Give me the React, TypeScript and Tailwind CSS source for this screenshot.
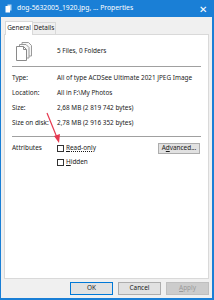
import React from "react"

const font = { fontFamily: '"Noto Sans", "Open Sans", "Liberation Sans", sans-serif' }

function FilesIcon() {
  return (
    <svg width="18" height="19" viewBox="0 0 18 19" fill="none">
      <path d="M7 0.5h6.5l3 3v10.5h-9.5z" fill="#f7f7f7" stroke="#9a9a9a" />
      <path d="M4.5 2.5h6.5l3 3v10.5h-9.5z" fill="#f7f7f7" stroke="#9a9a9a" />
      <path d="M1.5 4.5h7l3 3v11h-10z" fill="#ffffff" stroke="#8a8a8a" />
      <path d="M8.5 4.5v3h3" stroke="#8a8a8a" fill="none" />
    </svg>
  )
}

function TitleIcon() {
  return (
    <svg width="8" height="9" viewBox="0 0 8 9">
      <path d="M2.5 0.5h4v6h-4z" fill="#ffffff" opacity="0.7" />
      <path d="M0.5 2h4.5v6.5h-4.5z" fill="#ffffff" />
    </svg>
  )
}

function Checkbox() {
  return <div className="w-[7px] h-[7px] border border-[#333333] bg-white shrink-0" />
}

function InfoRow({ label, value }: { label: string; value: string }) {
  return (
    <div className="flex items-center h-[15px]">
      <span className="w-[45px] text-[#1a1a1a]">{label}</span>
      <span className="text-[#1a1a1a]">{value}</span>
    </div>
  )
}

export default function App() {
  return (
    <div className="w-[214px] h-[300px] bg-[#1a7fd6] flex flex-col overflow-hidden text-[6.4px] leading-none" style={font}>
      {/* Title bar */}
      <div className="h-[17px] flex items-center pl-[5px] pr-[7px] text-white">
        <TitleIcon />
        <span className="ml-[4px] text-[6.8px] flex-1">dog-5632005_1920.jpg, ... Properties</span>
        <span className="text-[10px] font-light">✕</span>
      </div>

      {/* Body */}
      <div className="flex-1 ml-[1px] mr-[2px] mb-[2px] bg-[#f0f0f0] flex flex-col pl-[3px] pr-[3px] pt-[4px]">
        {/* Tabs */}
        <div className="flex items-end h-[13px] pl-[1px] relative z-10">
          <div className="h-[14px] w-[28px] bg-white border border-b-0 border-[#d9d9d9] flex items-center justify-center text-[#1a1a1a] -mb-px">
            General
          </div>
          <div className="h-[12px] w-[23px] bg-[#f0f0f0] border border-l-0 border-b-0 border-[#d9d9d9] flex items-center justify-center text-[#1a1a1a]">
            Details
          </div>
        </div>

        {/* Panel */}
        <div className="relative w-[205px] h-[245px] bg-white border border-[#d9d9d9] px-[7px]">
          <div className="flex items-center h-[31px] pt-[1px]">
            <div className="w-[45px] pl-[3px]">
              <FilesIcon />
            </div>
            <span className="text-[#1a1a1a]">5 Files, 0 Folders</span>
          </div>
          <div className="h-px bg-[#a0a0a0] w-[189px]" />
          <div className="pt-[4px]">
            <InfoRow label="Type:" value="All of type ACDSee Ultimate 2021 JPEG Image" />
            <InfoRow label="Location:" value="All in F:\My Photos" />
            <InfoRow label="Size:" value="2,68 MB (2 819 742 bytes)" />
            <InfoRow label="Size on disk:" value="2,78 MB (2 916 352 bytes)" />
          </div>
          <div className="h-px bg-[#a0a0a0] w-[189px] mt-[5px]" />
          <div className="flex items-center h-[12px] mt-[5px]">
            <span className="w-[45px] text-[#1a1a1a]">Attributes</span>
            <Checkbox />
            <span className="ml-[2px] text-[#1a1a1a] underline decoration-[#1a1a1a] decoration-dotted underline-offset-[1px]">
              <span className="underline decoration-solid">R</span>ead-only
            </span>
            <div className="ml-auto mr-[1px] w-[42px] h-[11px] bg-[#e1e1e1] border border-[#adadad] flex items-center justify-center text-[#1a1a1a]">
              A<span className="underline">d</span>vanced...
            </div>
          </div>
          <div className="flex items-center h-[12px] mt-[2px]">
            <span className="w-[45px]" />
            <Checkbox />
            <span className="ml-[2px] text-[#1a1a1a]">
              <span className="underline">H</span>idden
            </span>
          </div>

          {/* Red arrow annotation */}
          <svg className="absolute left-[36px] top-[74px]" width="24" height="36" viewBox="0 0 24 36">
            <line x1="6" y1="4" x2="17" y2="31" stroke="#e53950" strokeWidth="1.2" />
            <path d="M13 27 L18 34 L19 25 Z" fill="#e53950" />
          </svg>
        </div>

        {/* Buttons */}
        <div className="flex justify-end gap-[5px] mt-[3px]">
          <div className="w-[43px] h-[13px] bg-[#e1e1e1] border border-[#0078d7] flex items-center justify-center text-[#1a1a1a]">
            OK
          </div>
          <div className="w-[43px] h-[13px] bg-[#e1e1e1] border border-[#adadad] flex items-center justify-center text-[#1a1a1a]">
            Cancel
          </div>
          <div className="w-[43px] h-[13px] bg-[#cccccc] border border-[#bfbfbf] flex items-center justify-center text-[#9a9a9a]">
            <span className="underline">A</span>pply
          </div>
        </div>
      </div>
    </div>
  )
}
